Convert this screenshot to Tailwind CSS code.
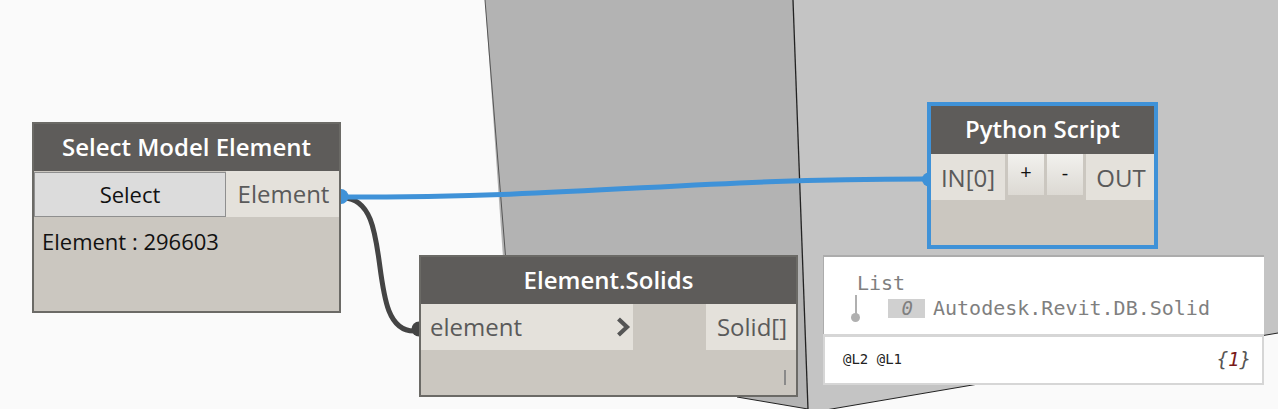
<!DOCTYPE html>
<html lang="en">
<head>
    <meta charset="UTF-8">
    <title>Dynamo graph</title>
    <script src="https://cdn.jsdelivr.net/npm/@tailwindcss/browser@4"></script>
</head>
<body class="bg-[#fafafa] font-['Open_Sans',sans-serif]">
    <div class="relative w-[1278px] h-[409px] overflow-hidden">
        <!-- 3D background and wires -->
        <svg class="absolute inset-0" width="1278" height="409" viewBox="0 0 1278 409" fill="none">
            <polygon points="793,0 1278,0 1278,333 808,413" fill="#c4c4c4" />
            <polygon points="485,0 793,0 808,409 737,397 510,358" fill="#b3b3b3" />
            <path d="M485 0 L506 262" stroke="#555" stroke-width="1" />
            <path d="M793 0 L808 409" stroke="#222" stroke-width="1.3" />
            <path d="M737 397 L808 409" stroke="#222" stroke-width="1" />
            <path d="M808 413 L1278 333" stroke="#222" stroke-width="1" />
        </svg>

        <!-- Watch node -->
        <div class="absolute left-[823px] top-[255px] w-[441px] h-[130px] flex flex-col bg-white border-t-2 border-l border-[#acacac]">
            <div class="relative h-[77px] font-['DejaVu_Sans_Mono',monospace] text-[20px] text-[#7f7f7f]">
                <span class="absolute left-[33px] top-[14px] leading-[24px]">List</span>
                <div class="absolute left-[31px] top-[38px] w-[2px] h-[22px] bg-[#b0b0b0]"></div>
                <div class="absolute left-[27px] top-[56px] w-[9px] h-[9px] rounded-full bg-[#b0b0b0]"></div>
                <div class="absolute left-[64px] top-[42px] flex items-center">
                    <span class="w-[37px] h-[19px] pr-[12px] bg-[#d0d0d0] flex items-center justify-end italic text-[19px] leading-none">0</span>
                    <span class="ml-[8px] leading-[19px]">Autodesk.Revit.DB.Solid</span>
                </div>
            </div>
            <div class="flex-1 flex items-center justify-between pl-[18px] pr-[11px] pb-[2px] border-2 border-t-[3px] border-[#d6d6d6] -ml-px font-['DejaVu_Sans_Mono',monospace]">
                <span class="text-[14px] text-[#222]">@L2 @L1</span>
                <span class="text-[19px] italic text-[#555]">{<span class="text-[#7a1a1a]">1</span>}</span>
            </div>
        </div>

        <!-- Select Model Element -->
        <div class="absolute left-[32px] top-[122px] w-[309px] h-[191px] flex flex-col bg-[#cbc7c0] border-2 border-[#6b6a66]">
            <div class="h-[47px] shrink-0 pb-[2px] bg-[#5e5c5a] text-white text-[24px] font-semibold flex items-center justify-center">Select Model Element</div>
            <div class="flex h-[46px] text-[24px]">
                <button class="w-[192px] h-[45px] mt-[1px] bg-[#dcdcdc] border-[1.5px] border-[#8f8f8f] text-[#111] text-[22px]">Select</button>
                <div class="flex-1 pl-[2px] bg-[#e4e1db] text-[#5a5a5a] flex items-center justify-center">Element</div>
            </div>
            <div class="pl-[8px] pt-[9px] text-[22px] text-[#111] leading-[30px]">Element : 296603</div>
        </div>

        <!-- Element.Solids -->
        <div class="absolute left-[419px] top-[255px] w-[379px] h-[142px] flex flex-col bg-[#cbc7c0] border-2 border-[#6b6a66]">
            <div class="h-[47px] shrink-0 pb-[2px] bg-[#5e5c5a] text-white text-[24px] font-semibold flex items-center justify-center">Element.Solids</div>
            <div class="flex justify-between h-[46px] text-[24px] text-[#5a5a5a]">
                <div class="w-[212px] bg-[#e4e1db] pl-[9px] flex items-center justify-between pr-[2px]">
                    <span>element</span>
                    <svg width="15" height="20" viewBox="0 0 15 20" fill="none"><path d="M2.5 2 L11 10 L2.5 18" stroke="#555" stroke-width="4.2" /></svg>
                </div>
                <div class="w-[90px] pl-[2px] bg-[#e4e1db] flex items-center justify-center">Solid[]</div>
            </div>
            <div class="flex-1 flex items-end justify-end pr-[10px] pb-[10px]">
                <div class="w-[2px] h-[15px] bg-[#8a8a8a]"></div>
            </div>
        </div>

        <!-- Python Script -->
        <div class="absolute left-[927px] top-[102px] w-[231px] h-[147px] flex flex-col bg-[#cbc7c0] border-[4px] border-[#3f92d8]">
            <div class="h-[48px] shrink-0 pb-[2px] bg-[#5e5c5a] text-white text-[24px] font-semibold flex items-center justify-center">Python Script</div>
            <div class="flex justify-between h-[46px] text-[24px] text-[#5a5a5a]">
                <div class="w-[74px] pt-[2px] bg-[#e4e1db] flex items-center justify-center">IN[0]</div>
                <div class="flex gap-[3px] ml-[3px] mr-[3px]">
                    <button class="w-[36px] h-[41px] bg-gradient-to-b from-[#f2f1ee] to-[#dcd9d3] text-[#111] text-[20px] pb-[6px]">+</button>
                    <button class="w-[36px] h-[41px] bg-gradient-to-b from-[#f2f1ee] to-[#dcd9d3] text-[#111] text-[20px] pb-[4px]">-</button>
                </div>
                <div class="flex-1 pt-[2px] pl-[2px] bg-[#e4e1db] flex items-center justify-center">OUT</div>
            </div>
        </div>

        <!-- Wires on top of the node edges -->
        <svg class="absolute inset-0 pointer-events-none" width="1278" height="409" viewBox="0 0 1278 409" fill="none">
            <path d="M343 198 C 398 198, 362 331, 414 331" stroke="#444" stroke-width="5" />
            <path d="M419 321.5 A 7.5 7.5 0 0 0 419 336.5 Z" fill="#444" />
            <path d="M343 197 C 600 197, 680 179, 925 179" stroke="#3f92d8" stroke-width="5" />
            <path d="M341 189 A 7.5 7.5 0 0 1 341 204 Z" fill="#3f92d8" />
            <path d="M929 172.5 A 7 7 0 0 0 929 186.5 Z" fill="#3f92d8" />
        </svg>
    </div>
</body>
</html>
